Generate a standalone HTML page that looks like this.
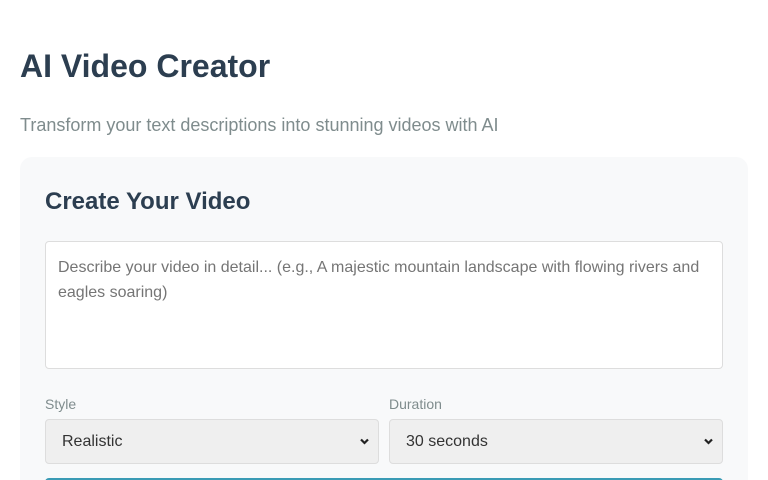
<!DOCTYPE html>
<html style="width:768px;height:480px;overflow:hidden"><head><style>
*{box-sizing:border-box;margin:0;padding:0}
body{width:768px;height:480px;overflow:hidden;background:#fff;font-family:"Liberation Sans",sans-serif;position:relative}
.a{position:absolute}
h1{position:absolute;left:20px;top:46px;font-size:32px;font-weight:bold;color:#2c3e50;line-height:40px}
.sub{left:20px;top:114px;font-size:18px;color:#7f8c8d;line-height:22px}
.card{left:20px;top:157px;width:728px;height:323px;background:#f8f9fa;border-radius:12px 12px 0 0}
h2{position:absolute;left:45px;top:187px;font-size:24px;font-weight:bold;color:#2c3e50;line-height:30px}
.ta{left:45px;top:241px;width:678px;height:128px;background:#fff;border:1px solid #ddd;border-radius:4px;padding:13px 12px 12px;font-size:16px;line-height:25px;color:#757575}
.lbl{font-size:14px;color:#7f8c8d;top:396px;line-height:16px}
.sel{top:419px;width:334px;height:45px;background:#efefef;border:1px solid #ddd;border-radius:4px;font-size:16px;color:#333;padding-left:16px;line-height:43px}
.sel svg{position:absolute;right:9px;top:18px}
.btn{left:45px;top:478px;width:678px;height:4px;border-radius:6px 6px 0 0;background:#3a9bb5}
</style></head><body>
<h1>AI Video Creator</h1>
<div class="a sub">Transform your text descriptions into stunning videos with AI</div>
<div class="a card"></div>
<h2>Create Your Video</h2>
<div class="a ta">Describe your video in detail... (e.g., A majestic mountain landscape with flowing rivers and eagles soaring)</div>
<div class="a lbl" style="left:45px">Style</div>
<div class="a lbl" style="left:389px">Duration</div>
<div class="a sel" style="left:45px">Realistic<svg width="9" height="7" viewBox="0 0 9 7"><path d="M1 1.5L4.5 5L8 1.5" stroke="#222" stroke-width="2.2" fill="none"/></svg></div>
<div class="a sel" style="left:389px">30 seconds<svg width="9" height="7" viewBox="0 0 9 7"><path d="M1 1.5L4.5 5L8 1.5" stroke="#222" stroke-width="2.2" fill="none"/></svg></div>
<div class="a btn"></div>
</body></html>
